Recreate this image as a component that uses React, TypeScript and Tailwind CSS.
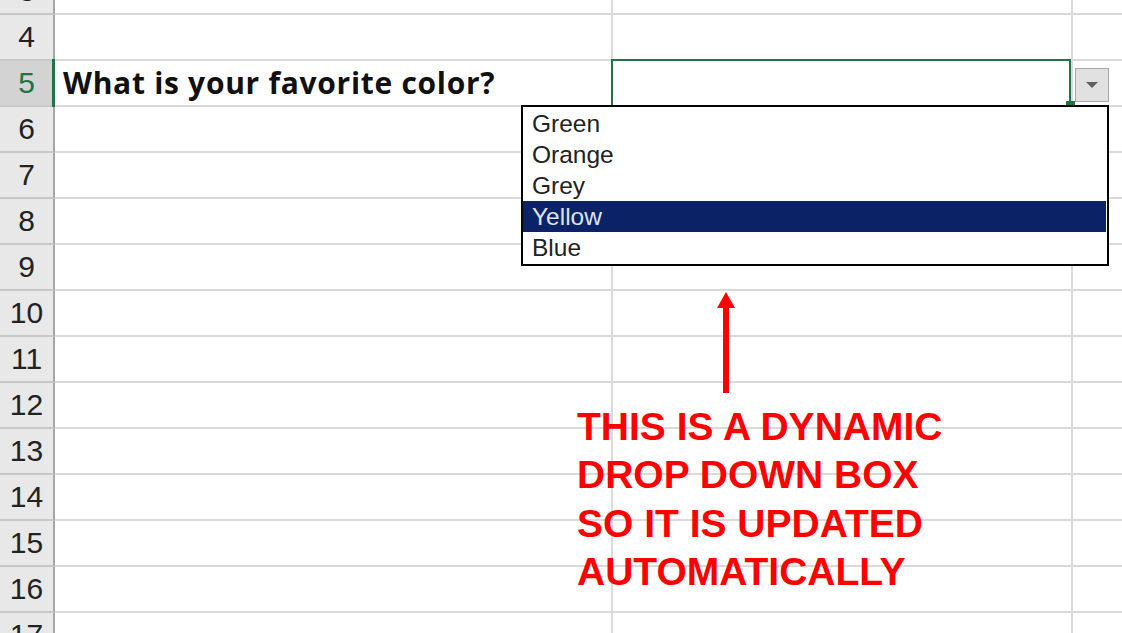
import React from "react";

const rows = [3, 4, 5, 6, 7, 8, 9, 10, 11, 12, 13, 14, 15, 16, 17];
const items = ["Green", "Orange", "Grey", "Yellow", "Blue"];
const arial = { fontFamily: '"Liberation Sans", Arial, sans-serif' };

function DropDown() {
  return (
    <>
      {/* selection border + fill handle */}
      <div className="absolute left-[-2px] top-[-2px] w-[460px] h-[48px] border-2 border-[#217346]" />
      <div className="absolute right-[-4px] top-[40px] w-[9px] h-[7px] bg-[#217346]" />
      {/* dropdown button */}
      <div className="absolute left-[462px] top-[7px] w-[34px] h-[34px] bg-[#e1e1e1] border border-[#a8a8a8] flex items-center justify-center">
        <svg width="14" height="8" viewBox="0 0 14 8">
          <polygon points="1,1 13,1 7,7" fill="#5f5f5f" />
        </svg>
      </div>
      {/* list */}
      <div
        className="absolute z-10 left-[-92px] top-[44px] w-[588px] h-[161px] border-2 border-black bg-white pt-[1px] pr-[1px] flex flex-col"
        style={arial}
      >
        {items.map((it) => (
          <div
            key={it}
            className={
              "h-[31px] flex items-center pl-[9px] pt-[1px] text-[24.5px] leading-none " +
              (it === "Yellow" ? "bg-[#0c2266] text-[#dfe2ea]" : "text-[#222]")
            }
          >
            {it}
          </div>
        ))}
      </div>
    </>
  );
}

function Row({ n }: { n: number }) {
  const sel = n === 5;
  return (
    <div className="flex h-[46px] shrink-0">
      <div
        className={
          "relative w-[55px] shrink-0 flex items-center justify-center border-b-2 border-r-2 border-b-[#c8c8c8] border-r-[#a6a6a6] text-[30px] leading-none " +
          (sel ? "bg-[#d3d3d3] text-[#217346]" : "bg-[#e8e8e8] text-[#222]")
        }
        style={arial}
      >
        {n}
        {sel && <div className="absolute right-[-2px] top-[-2px] h-[48px] w-[3px] bg-[#217346]" />}
      </div>
      <div className="w-[558px] shrink-0 flex items-center border-b-2 border-r-2 border-[#dadada] pl-[8px]">
        {sel && (
          <span
            className="text-[#111] font-bold text-[30px] tracking-[0.7px] leading-none whitespace-nowrap"
            style={{ fontFamily: '"Open Sans", Lato, sans-serif' }}
          >
            What is your favorite color?
          </span>
        )}
      </div>
      <div className="relative w-[460px] shrink-0 border-b-2 border-r-2 border-[#dadada]">
        {sel && <DropDown />}
      </div>
      <div className="flex-1 border-b-2 border-[#dadada]" />
    </div>
  );
}

export default function App() {
  return (
    <div className="relative w-[1122px] h-[633px] overflow-hidden bg-white">
      <div className="flex flex-col mt-[-31px]">
        {rows.map((n) => (
          <Row key={n} n={n} />
        ))}
      </div>

      {/* annotation: arrow + caption */}
      <div className="absolute left-[577px] top-[292px] flex flex-col">
        <svg className="ml-[139px]" width="20" height="101" viewBox="0 0 20 101">
          <polygon points="10,0 19,16 1,16" fill="#ff0000" />
          <rect x="7" y="14" width="6" height="87" fill="#ff0000" />
        </svg>
        <div
          className="mt-[10px] text-[#ff0000] font-bold text-[39px] leading-[48.3px] whitespace-nowrap"
          style={arial}
        >
          <div>THIS IS A DYNAMIC</div>
          <div>DROP DOWN BOX</div>
          <div>SO IT IS UPDATED</div>
          <div>AUTOMATICALLY</div>
        </div>
      </div>
    </div>
  );
}
